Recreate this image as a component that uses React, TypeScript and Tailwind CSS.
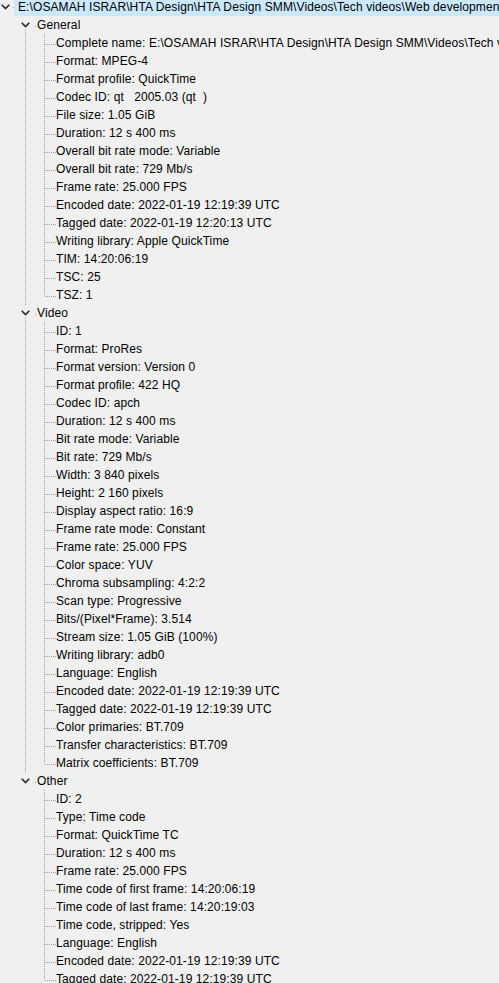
import React from "react";

const VD =
  "w-px bg-[repeating-linear-gradient(to_bottom,#a0a0a0_0px,#a0a0a0_1px,transparent_1px,transparent_2px)]";
const HD =
  "h-px bg-[repeating-linear-gradient(to_right,#a0a0a0_0px,#a0a0a0_1px,transparent_1px,transparent_2px)]";

type Group = { name: string; items: string[] };

const groups: Group[] = [
  {
    name: "General",
    items: [
      "Complete name: E:\\OSAMAH ISRAR\\HTA Design\\HTA Design SMM\\Videos\\Tech videos\\Web development short.mov",
      "Format: MPEG-4",
      "Format profile: QuickTime",
      "Codec ID: qt   2005.03 (qt  )",
      "File size: 1.05 GiB",
      "Duration: 12 s 400 ms",
      "Overall bit rate mode: Variable",
      "Overall bit rate: 729 Mb/s",
      "Frame rate: 25.000 FPS",
      "Encoded date: 2022-01-19 12:19:39 UTC",
      "Tagged date: 2022-01-19 12:20:13 UTC",
      "Writing library: Apple QuickTime",
      "TIM: 14:20:06:19",
      "TSC: 25",
      "TSZ: 1",
    ],
  },
  {
    name: "Video",
    items: [
      "ID: 1",
      "Format: ProRes",
      "Format version: Version 0",
      "Format profile: 422 HQ",
      "Codec ID: apch",
      "Duration: 12 s 400 ms",
      "Bit rate mode: Variable",
      "Bit rate: 729 Mb/s",
      "Width: 3 840 pixels",
      "Height: 2 160 pixels",
      "Display aspect ratio: 16:9",
      "Frame rate mode: Constant",
      "Frame rate: 25.000 FPS",
      "Color space: YUV",
      "Chroma subsampling: 4:2:2",
      "Scan type: Progressive",
      "Bits/(Pixel*Frame): 3.514",
      "Stream size: 1.05 GiB (100%)",
      "Writing library: adb0",
      "Language: English",
      "Encoded date: 2022-01-19 12:19:39 UTC",
      "Tagged date: 2022-01-19 12:19:39 UTC",
      "Color primaries: BT.709",
      "Transfer characteristics: BT.709",
      "Matrix coefficients: BT.709",
    ],
  },
  {
    name: "Other",
    items: [
      "ID: 2",
      "Type: Time code",
      "Format: QuickTime TC",
      "Duration: 12 s 400 ms",
      "Frame rate: 25.000 FPS",
      "Time code of first frame: 14:20:06:19",
      "Time code of last frame: 14:20:19:03",
      "Time code, stripped: Yes",
      "Language: English",
      "Encoded date: 2022-01-19 12:19:39 UTC",
      "Tagged date: 2022-01-19 12:19:39 UTC",
    ],
  },
];

function Chevron() {
  return (
    <svg width="9" height="6" viewBox="0 0 9 6" className="block">
      <path d="M0.7 0.8 L4.5 4.6 L8.3 0.8" fill="none" stroke="#2a2a2a" strokeWidth="1.6" />
    </svg>
  );
}

function AncestorCell({ line }: { line: boolean }) {
  return (
    <div className="flex h-[18px] w-[19px] shrink-0">
      {line && <div className={`ml-[6px] h-full ${VD}`} />}
    </div>
  );
}

function LeafCell({ last }: { last: boolean }) {
  return (
    <div className="flex h-[18px] w-[18px] shrink-0">
      <div className="w-[6px] shrink-0" />
      <div className="flex w-px flex-col">
        <div className={`h-[10px] ${VD}`} />
        {!last && <div className={`h-[8px] ${VD}`} />}
      </div>
      <div className="flex-1 pt-[10px]">
        <div className={`w-full ${HD}`} />
      </div>
    </div>
  );
}

function NodeCell({ first, last }: { first: boolean; last: boolean }) {
  return (
    <div className="grid h-[18px] w-[18px] shrink-0">
      <div className="col-start-1 row-start-1 ml-[6px] flex h-[18px] flex-col">
        {first ? <div className="h-[2px]" /> : <div className={`h-[2px] ${VD}`} />}
        <div className="flex-1" />
        {!last && <div className={`h-[4px] ${VD}`} />}
      </div>
      <div className="col-start-1 row-start-1 ml-[2px] mt-[6px]">
        <Chevron />
      </div>
      <div className="col-start-1 row-start-1 ml-[16px] mt-[10px] h-px w-px bg-[#a0a0a0]" />
    </div>
  );
}

function Label({ text }: { text: string }) {
  return <span className="whitespace-pre leading-[18px]">{text}</span>;
}

export default function App() {
  return (
    <div
      className="h-[983px] w-full overflow-hidden bg-[#f0f0f0] text-[12px] tracking-[0.1px] text-black"
      style={{ fontFamily: '"Liberation Sans", Arial, sans-serif' }}
    >
      <div className="-mt-[2px] flex flex-col">
        {/* root */}
        <div className="flex h-[18px] items-stretch whitespace-nowrap">
          <div className="grid h-[18px] w-[14px] shrink-0">
            <div className="col-start-1 row-start-1 ml-[1px] mt-[6px]">
              <Chevron />
            </div>
            <div className="col-start-1 row-start-1 ml-[13px] mt-[9px] h-px w-px bg-[#a0a0a0]" />
          </div>
          <div className="flex-1 bg-[#cce8ff] pl-[4px]">
            <Label text={"E:\\OSAMAH ISRAR\\HTA Design\\HTA Design SMM\\Videos\\Tech videos\\Web development short.mov"} />
          </div>
        </div>
        {groups.map((g, gi) => {
          const lastGroup = gi === groups.length - 1;
          return (
            <React.Fragment key={g.name}>
              <div className="flex h-[18px] whitespace-nowrap">
                <AncestorCell line={false} />
                <NodeCell first={gi === 0} last={lastGroup} />
                <Label text={g.name} />
              </div>
              {g.items.map((it, ii) => (
                <div key={ii} className="flex h-[18px] whitespace-nowrap">
                  <AncestorCell line={false} />
                  <AncestorCell line={!lastGroup} />
                  <LeafCell last={ii === g.items.length - 1} />
                  <Label text={it} />
                </div>
              ))}
            </React.Fragment>
          );
        })}
      </div>
    </div>
  );
}
